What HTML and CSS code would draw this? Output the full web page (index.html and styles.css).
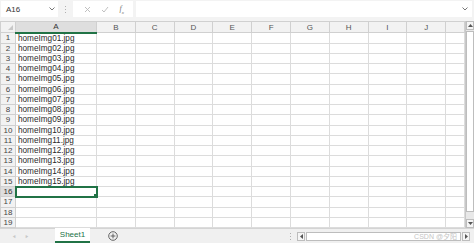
FILE: index.html
```html
<!DOCTYPE html>
<html lang="zh">
<head>
    <meta charset="UTF-8">
    <meta name="viewport" content="width=device-width, initial-scale=1.0">
    <title>Book1 - Excel</title>
    <link rel="stylesheet" href="styles.css">
</head>
<body>

<div class="app">
    <!-- Formula bar -->
    <div class="formula-bar">
        <div class="name-box">
            <span>A16</span>
            <svg class="caret" width="6" height="4" viewBox="0 0 6 4"><path d="M0.5 0.5 L3 3 L5.5 0.5" fill="none" stroke="#666" stroke-width="0.9"/></svg>
        </div>
        <div class="grip"><i></i><i></i><i></i></div>
        <div class="fx-buttons">
            <svg width="7" height="7" viewBox="0 0 7 7"><path d="M1 1 L6 6 M6 1 L1 6" stroke="#b9b9b9" stroke-width="0.9"/></svg>
            <svg width="8" height="7" viewBox="0 0 8 7"><path d="M1 4 L3 6 L7 1" fill="none" stroke="#b9b9b9" stroke-width="0.9"/></svg>
            <span class="fx">f<sub>x</sub></span>
        </div>
        <div class="formula-input">
            <svg class="chevron" width="6" height="4" viewBox="0 0 6 4"><path d="M0.5 0.5 L3 3 L5.5 0.5" fill="none" stroke="#666" stroke-width="0.9"/></svg>
        </div>
    </div>

    <!-- Sheet -->
    <div class="sheet">
        <table class="grid">
            <colgroup>
                <col class="c-row"><col class="c-a">
                <col class="c-n"><col class="c-n"><col class="c-n"><col class="c-n"><col class="c-n">
                <col class="c-n"><col class="c-n"><col class="c-n"><col class="c-n"><col>
            </colgroup>
            <thead>
                <tr>
                    <th class="corner"><span class="tri"></span></th>
                    <th class="sel-col">A</th><th>B</th><th>C</th><th>D</th><th>E</th>
                    <th>F</th><th>G</th><th>H</th><th>I</th><th>J</th><th></th>
                </tr>
            </thead>
            <tbody>
                <tr><th>1</th><td>homeImg01.jpg</td><td></td><td></td><td></td><td></td><td></td><td></td><td></td><td></td><td></td><td></td></tr>
                <tr><th>2</th><td>homeImg02.jpg</td><td></td><td></td><td></td><td></td><td></td><td></td><td></td><td></td><td></td><td></td></tr>
                <tr><th>3</th><td>homeImg03.jpg</td><td></td><td></td><td></td><td></td><td></td><td></td><td></td><td></td><td></td><td></td></tr>
                <tr><th>4</th><td>homeImg04.jpg</td><td></td><td></td><td></td><td></td><td></td><td></td><td></td><td></td><td></td><td></td></tr>
                <tr><th>5</th><td>homeImg05.jpg</td><td></td><td></td><td></td><td></td><td></td><td></td><td></td><td></td><td></td><td></td></tr>
                <tr><th>6</th><td>homeImg06.jpg</td><td></td><td></td><td></td><td></td><td></td><td></td><td></td><td></td><td></td><td></td></tr>
                <tr><th>7</th><td>homeImg07.jpg</td><td></td><td></td><td></td><td></td><td></td><td></td><td></td><td></td><td></td><td></td></tr>
                <tr><th>8</th><td>homeImg08.jpg</td><td></td><td></td><td></td><td></td><td></td><td></td><td></td><td></td><td></td><td></td></tr>
                <tr><th>9</th><td>homeImg09.jpg</td><td></td><td></td><td></td><td></td><td></td><td></td><td></td><td></td><td></td><td></td></tr>
                <tr><th>10</th><td>homeImg10.jpg</td><td></td><td></td><td></td><td></td><td></td><td></td><td></td><td></td><td></td><td></td></tr>
                <tr><th>11</th><td>homeImg11.jpg</td><td></td><td></td><td></td><td></td><td></td><td></td><td></td><td></td><td></td><td></td></tr>
                <tr><th>12</th><td>homeImg12.jpg</td><td></td><td></td><td></td><td></td><td></td><td></td><td></td><td></td><td></td><td></td></tr>
                <tr><th>13</th><td>homeImg13.jpg</td><td></td><td></td><td></td><td></td><td></td><td></td><td></td><td></td><td></td><td></td></tr>
                <tr><th>14</th><td>homeImg14.jpg</td><td></td><td></td><td></td><td></td><td></td><td></td><td></td><td></td><td></td><td></td></tr>
                <tr><th>15</th><td>homeImg15.jpg</td><td></td><td></td><td></td><td></td><td></td><td></td><td></td><td></td><td></td><td></td></tr>
                <tr><th class="sel-row">16</th><td class="active"></td><td></td><td></td><td></td><td></td><td></td><td></td><td></td><td></td><td></td><td></td></tr>
                <tr><th>17</th><td></td><td></td><td></td><td></td><td></td><td></td><td></td><td></td><td></td><td></td><td></td></tr>
                <tr><th>18</th><td></td><td></td><td></td><td></td><td></td><td></td><td></td><td></td><td></td><td></td><td></td></tr>
                <tr><th>19</th><td></td><td></td><td></td><td></td><td></td><td></td><td></td><td></td><td></td><td></td><td></td></tr>
            </tbody>
        </table>

        <!-- Vertical scrollbar -->
        <div class="vscroll">
            <div class="arrow-box">
                <svg width="5" height="3" viewBox="0 0 5 3"><path d="M0 3 L2.5 0 L5 3 Z" fill="#555"/></svg>
            </div>
            <div class="thumb"></div>
            <div class="arrow-box">
                <svg width="5" height="3" viewBox="0 0 5 3"><path d="M0 0 L2.5 3 L5 0 Z" fill="#555"/></svg>
            </div>
        </div>
    </div>

    <!-- Sheet tabs -->
    <div class="tabbar">
        <div class="nav">
            <span>&#9664;</span>
            <span>&#9654;</span>
        </div>
        <div class="tab">Sheet1</div>
        <div class="add">
            <svg width="10" height="10" viewBox="0 0 10 10"><circle cx="5" cy="5" r="4.3" fill="none" stroke="#555" stroke-width="0.9"/><path d="M5 2.6 V7.4 M2.6 5 H7.4" stroke="#555" stroke-width="0.9"/></svg>
        </div>
        <div class="spacer"></div>
        <div class="grip small"><i></i><i></i><i></i></div>
        <div class="hscroll">
            <div class="arrow-box">
                <svg width="3" height="5" viewBox="0 0 3 5"><path d="M3 0 L0 2.5 L3 5 Z" fill="#555"/></svg>
            </div>
            <div class="hthumb">
                <span class="watermark">CSDN @夕阳</span>
            </div>
            <div class="arrow-box">
                <svg width="3" height="5" viewBox="0 0 3 5"><path d="M0 0 L3 2.5 L0 5 Z" fill="#555"/></svg>
            </div>
        </div>
    </div>
</div>

</body>
</html>
```

FILE: styles.css
```css
* {
    margin: 0;
    padding: 0;
    box-sizing: border-box;
}

body {
    font-family: 'Liberation Sans', Arial, sans-serif;
    background: #f3f3f3;
    color: #333;
}

.app {
    width: 474px;
    height: 243px;
    display: flex;
    flex-direction: column;
    overflow: hidden;
}

/* Formula bar */
.formula-bar {
    height: 21px;
    display: flex;
    align-items: flex-start;
    padding: 1px 2px 0 1px;
    gap: 0;
}

.name-box {
    width: 57px;
    height: 16px;
    background: #fff;
    display: flex;
    align-items: center;
    justify-content: space-between;
    padding: 0 3px 0 5px;
    font-size: 8px;
    color: #333;
}

.grip {
    width: 15px;
    height: 16px;
    display: flex;
    flex-direction: column;
    align-items: center;
    justify-content: center;
    gap: 2px;
}

.grip i {
    width: 1px;
    height: 1px;
    background: #b0b0b0;
}

.fx-buttons {
    width: 60px;
    height: 16px;
    background: #fff;
    display: flex;
    align-items: center;
    justify-content: space-around;
    padding: 0 4px 0 6px;
}

.fx {
    font-family: 'Liberation Serif', serif;
    font-style: italic;
    font-size: 8px;
    color: #777;
}

.fx sub {
    font-size: 5px;
}

.formula-input {
    flex: 1;
    height: 16px;
    margin-left: 3px;
    background: #fff;
    display: flex;
    align-items: center;
    justify-content: flex-end;
    padding-right: 4px;
}

/* Sheet grid */
.sheet {
    display: flex;
    height: 207px;
    background: #fff;
}

.grid {
    width: 465px;
    border-collapse: collapse;
    table-layout: fixed;
    font-size: 8.2px;
}

.c-row { width: 15px; }
.c-a { width: 81px; }
.c-n { width: 38.8px; }

.grid th,
.grid td {
    height: 10.25px;
    line-height: 9px;
    border: 1px solid #dcdcdc;
    padding: 0;
    white-space: nowrap;
    overflow: hidden;
}

.grid td {
    padding-left: 2px;
    color: #2a2a2a;
    font-family: 'Liberation Sans', 'Noto Sans CJK SC', sans-serif;
}

.grid thead th {
    height: 11px;
    background: #f2f2f2;
    border-color: #d0d0d0;
    font-weight: normal;
    color: #555;
    font-size: 8px;
    text-align: center;
}

.grid tbody th {
    background: #f2f2f2;
    border-color: #d0d0d0;
    font-weight: normal;
    color: #444;
    font-size: 8px;
    text-align: center;
}

.grid thead th.sel-col {
    background: #dedede;
    border-bottom: 2px solid #217346;
    color: #333;
}

.grid tbody th.sel-row {
    background: #dedede;
    color: #333;
}

.corner {
    position: relative;
}

.corner .tri {
    position: absolute;
    right: 2px;
    bottom: 2px;
    width: 0;
    height: 0;
    border-left: 5px solid transparent;
    border-bottom: 5px solid #c8c8c8;
}

.grid td.active {
    position: relative;
    outline: 2px solid #217346;
    outline-offset: -1px;
}

.grid td.active::after {
    content: '';
    position: absolute;
    right: -2px;
    bottom: -2px;
    width: 3px;
    height: 3px;
    background: #217346;
    border: 1px solid #fff;
}

/* Vertical scrollbar */
.vscroll {
    width: 9px;
    display: flex;
    flex-direction: column;
    background: #e8e8e8;
    border-left: 1px solid #c8c8c8;
}

.vscroll .arrow-box {
    height: 9px;
    display: flex;
    align-items: center;
    justify-content: center;
    background: #f5f5f5;
    border: 1px solid #bdbdbd;
}

.vscroll .thumb {
    flex: 1;
    margin: 1px 0 7px;
    background: #fff;
    border: 1px solid #bdbdbd;
}

/* Tab bar */
.tabbar {
    height: 15px;
    display: flex;
    align-items: stretch;
    background: #f0f0f0;
    border-top: 1px solid #d4d4d4;
}

.nav {
    width: 55px;
    display: flex;
    align-items: center;
    padding-left: 12px;
    gap: 9px;
    font-size: 4px;
    color: #c8c8c8;
}

.tab {
    width: 35px;
    background: #fff;
    color: #217346;
    font-size: 8px;
    display: flex;
    align-items: center;
    justify-content: center;
    border-bottom: 2px solid #217346;
    margin-top: -1px;
}

.add {
    width: 46px;
    display: flex;
    align-items: center;
    justify-content: center;
}

.spacer {
    flex: 1;
}

.grip.small {
    height: 14px;
    width: 14px;
}

.hscroll {
    width: 177px;
    display: flex;
    align-items: center;
    padding: 2px 4px 2px 0;
}

.hscroll .arrow-box {
    width: 8px;
    height: 9px;
    display: flex;
    align-items: center;
    justify-content: center;
    background: #f5f5f5;
    border: 1px solid #bdbdbd;
}

.hthumb {
    flex: 1;
    height: 9px;
    margin: 0 1px;
    background: #fff;
    border: 1px solid #bdbdbd;
    display: flex;
    align-items: center;
    justify-content: flex-end;
    padding-right: 3px;
}

.watermark {
    font-size: 7px;
    color: #c4c4c4;
    font-family: 'Liberation Sans', 'Noto Sans CJK SC', sans-serif;
}
```
